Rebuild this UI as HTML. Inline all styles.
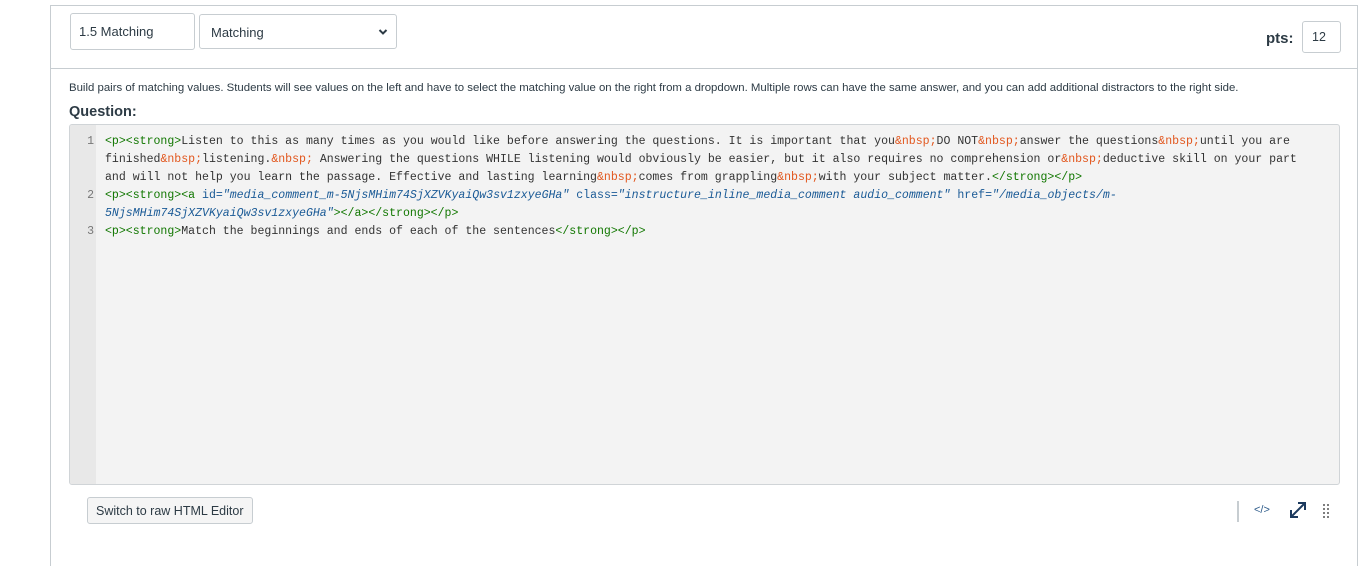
<!DOCTYPE html>
<html><head><style>
body{margin:0;width:1363px;height:542px;overflow:hidden;background:#fff;font-family:"Liberation Sans",sans-serif;color:#2d3b45;position:relative}
.box{position:absolute;left:50px;top:5px;width:1306px;height:560px;border:1px solid #c7cdd1;border-bottom:none}
.hdr{position:absolute;left:0;top:0;width:1306px;height:62px;border-bottom:1px solid #c7cdd1}
.inp{position:absolute;border:1px solid #c7cdd1;border-radius:3px;font-size:13px;color:#2d3b45;box-sizing:border-box}
.code{position:absolute;left:69px;top:124px;width:1271px;height:361px;border:1px solid #d0d4d7;border-radius:3px;background:#f3f3f3;box-sizing:border-box;overflow:hidden}
.gut{position:absolute;left:0;top:0;width:26px;height:100%;background:#e8e8e8}
pre{position:absolute;left:0;top:8px;margin:0;font-family:"Liberation Mono",monospace;font-size:11.55px;line-height:18px;color:#333}
.n{display:inline-block;width:35px;text-align:right;padding-right:11px;box-sizing:border-box;color:#777}
.t{color:#117700}.e{color:#e2571e}.a{color:#1a5a96}.s{color:#1a5a96;font-style:italic}
</style></head><body>
<div class="box"><div class="hdr">
<div class="inp" style="left:19px;top:7px;width:125px;height:37px;padding:10px 8px">1.5 Matching</div>
<div class="inp" style="left:148px;top:8px;width:198px;height:35px;padding:10px 11px">Matching<svg style="position:absolute;right:8px;top:13px" width="10" height="8" viewBox="0 0 10 8"><path d="M1.5 2l3.5 3.5L8.5 2" fill="none" stroke="#2d3b45" stroke-width="2"/></svg></div>
<div style="position:absolute;left:1215px;top:24px;font-size:15px;font-weight:bold;color:#2d3b45">pts:</div>
<div class="inp" style="left:1251px;top:15px;width:39px;height:32px;padding:8px 9px;font-size:12.5px">12</div>
</div></div>
<div style="position:absolute;left:69px;top:82px;font-size:11.4px">Build pairs of matching values. Students will see values on the left and have to select the matching value on the right from a dropdown. Multiple rows can have the same answer, and you can add additional distractors to the right side.</div>
<div style="position:absolute;left:69px;top:104px;font-size:14.5px;font-weight:bold">Question:</div>
<div class="code"><div class="gut"></div><pre><span class="n">1</span><span class="t">&lt;p&gt;&lt;strong&gt;</span>Listen to this as many times as you would like before answering the questions. It is important that you<span class="e">&amp;nbsp;</span>DO NOT<span class="e">&amp;nbsp;</span>answer the questions<span class="e">&amp;nbsp;</span>until you are
<span class="n"></span>finished<span class="e">&amp;nbsp;</span>listening.<span class="e">&amp;nbsp;</span> Answering the questions WHILE listening would obviously be easier, but it also requires no comprehension or<span class="e">&amp;nbsp;</span>deductive skill on your part
<span class="n"></span>and will not help you learn the passage. Effective and lasting learning<span class="e">&amp;nbsp;</span>comes from grappling<span class="e">&amp;nbsp;</span>with your subject matter.<span class="t">&lt;/strong&gt;&lt;/p&gt;</span>
<span class="n">2</span><span class="t">&lt;p&gt;&lt;strong&gt;&lt;a</span> <span class="a">id=</span><span class="s">"media_comment_m-5NjsMHim74SjXZVKyaiQw3sv1zxyeGHa"</span> <span class="a">class=</span><span class="s">"instructure_inline_media_comment audio_comment"</span> <span class="a">href=</span><span class="s">"/media_objects/m-</span>
<span class="n"></span><span class="s">5NjsMHim74SjXZVKyaiQw3sv1zxyeGHa"</span><span class="t">&gt;&lt;/a&gt;&lt;/strong&gt;&lt;/p&gt;</span>
<span class="n">3</span><span class="t">&lt;p&gt;&lt;strong&gt;</span>Match the beginnings and ends of each of the sentences<span class="t">&lt;/strong&gt;&lt;/p&gt;</span></pre></div>
<div style="position:absolute;left:87px;top:497px;width:166px;height:27px;border:1px solid #c7cdd1;border-radius:3px;background:#f5f5f5;box-sizing:border-box;font-size:12.5px;padding:6px 8px">Switch to raw HTML Editor</div>
<div style="position:absolute;left:1237px;top:501px;width:2px;height:21px;background:#c7cdd1"></div>
<div style="position:absolute;left:1254px;top:504px;font-size:11px;color:#2d5b8a;font-family:'Liberation Sans',sans-serif">&lt;/&gt;</div>
<svg style="position:absolute;left:1288px;top:500px" width="20" height="20" viewBox="0 0 20 20" fill="none" stroke="#1c3a5e" stroke-width="2"><path d="M3 17L17 3M10 3h7v7M3 10v7h7"/></svg>
<svg style="position:absolute;left:1322px;top:503px" width="8" height="16" viewBox="0 0 8 16" fill="#555"><circle cx="2" cy="2" r="1"/><circle cx="6" cy="2" r="1"/><circle cx="2" cy="6" r="1"/><circle cx="6" cy="6" r="1"/><circle cx="2" cy="10" r="1"/><circle cx="6" cy="10" r="1"/><circle cx="2" cy="14" r="1"/><circle cx="6" cy="14" r="1"/></svg>
</body></html>
